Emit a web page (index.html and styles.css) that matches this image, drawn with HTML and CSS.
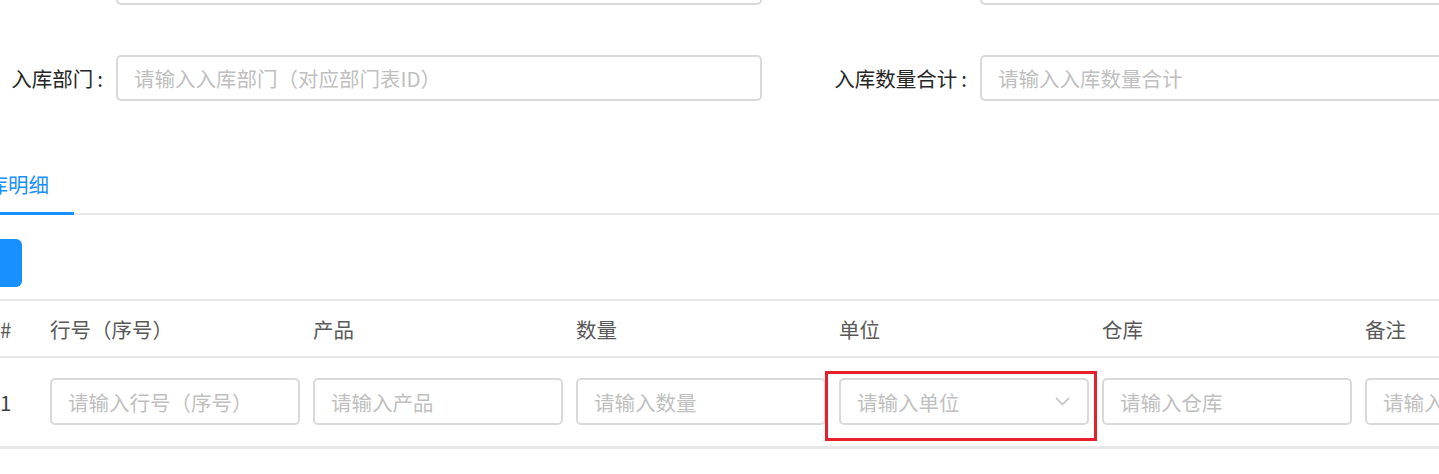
FILE: index.html
```html
<!DOCTYPE HTML>
<html>
  <head>
    <meta charset="UTF-8">
    <title>入库单</title>
    <link rel="stylesheet" href="styles.css">
  </head>

  <body>
    <div class="page">

      <form class="form">
        <div class="form-row">
          <label class="label" for="code">入库单号</label>
          <input type="text" class="input" id="code" placeholder="请输入入库单号">
          <label class="label" for="date">入库日期</label>
          <input type="text" class="input" id="date" placeholder="请输入入库日期">
        </div>
        <div class="form-row">
          <label class="label" for="dept">入库部门</label>
          <input type="text" class="input" id="dept" placeholder="请输入入库部门（对应部门表ID）">
          <label class="label" for="total">入库数量合计</label>
          <input type="text" class="input" id="total" placeholder="请输入入库数量合计">
        </div>
      </form>

      <div class="tabs">
        <div class="tab active">入库明细</div>
      </div>

      <button type="button" class="button">新增</button>

      <div class="table">
        <div class="tr thead">
          <div class="th">#</div>
          <div class="th">行号（序号）</div>
          <div class="th">产品</div>
          <div class="th">数量</div>
          <div class="th">单位</div>
          <div class="th">仓库</div>
          <div class="th">备注</div>
        </div>
        <div class="tr">
          <div class="td num">1</div>
          <div class="td"><input type="text" class="input cell-input" placeholder="请输入行号（序号）"></div>
          <div class="td"><input type="text" class="input cell-input" placeholder="请输入产品"></div>
          <div class="td"><input type="text" class="input cell-input" placeholder="请输入数量"></div>
          <div class="td marked">
            <div class="select">
              <span class="placeholder">请输入单位</span>
              <svg class="arrow" width="15" height="9" viewBox="0 0 15 9"><polyline points="1,1 7.5,7.5 14,1" fill="none" stroke="#bfbfbf" stroke-width="1.5"/></svg>
            </div>
            <div class="mark"></div>
          </div>
          <div class="td"><input type="text" class="input cell-input" placeholder="请输入仓库"></div>
          <div class="td"><input type="text" class="input cell-input" placeholder="请输入备注"></div>
        </div>
      </div>

    </div>
  </body>
</html>
```

FILE: styles.css
```css
body {
  margin: 0;
  background: #ffffff;
  font-family: "Noto Sans CJK SC", "Noto Sans", sans-serif;
  font-size: 20.5px;
  color: #262626;
}

.page {
  width: 1439px;
  height: 474px;
  overflow: hidden;
}

/* form on top, first row is scrolled out of view */
.form {
  margin: -41px 0 0 0;
}

.form-row {
  display: grid;
  grid-template-columns: 116px 646px 218px 646px;
  align-items: center;
  margin-bottom: 50px;
}

.form-row:last-child {
  margin-bottom: 0;
}

.label {
  text-align: right;
  white-space: nowrap;
  color: #262626;
  line-height: 30px;
}

.label::after {
  content: ":";
  margin: 0 13px 0 4px;
}

.input {
  box-sizing: border-box;
  height: 46px;
  padding: 0 16px;
  border: 2px solid #d9d9d9;
  border-radius: 5px;
  font-family: inherit;
  font-size: 20.5px;
  color: #262626;
  background: #ffffff;
  outline: none;
}

.input::placeholder {
  color: #bfbfbf;
}

/* tabs */
.tabs {
  display: flex;
  margin-top: 50px;
  border-bottom: 2px solid #e8e8e8;
}

.tab {
  margin: 0 0 -2px -58px;
  padding: 18px 25px 13px 25px;
  line-height: 30px;
  white-space: nowrap;
  color: #1890ff;
  border-bottom: 3px solid #1890ff;
}

.button {
  display: block;
  margin: 24px 0 0 -62px;
  height: 48px;
  padding: 0 23px 0 21px;
  font-family: inherit;
  font-size: 20px;
  color: #ffffff;
  background-color: #1890ff;
  border: none;
  border-radius: 6px;
}

/* table */
.table {
  margin-top: 12px;
}

.tr {
  display: grid;
  grid-template-columns: 50px repeat(6, 263px);
  border-bottom: 3px solid #e8e8e8;
}

.thead {
  border-top: 2px solid #e8e8e8;
  border-bottom: 2px solid #e8e8e8;
}

.th {
  height: 55px;
  line-height: 55px;
  padding-top: 1px;
  box-sizing: border-box;
  color: #595959;
  white-space: nowrap;
}

.td {
  padding: 20px 0 21px 0;
  display: flex;
  align-items: center;
}

.num {
  color: #404040;
}

.cell-input {
  width: 250px;
  height: 47px;
}

.select {
  box-sizing: border-box;
  width: 250px;
  height: 47px;
  display: flex;
  align-items: center;
  justify-content: space-between;
  padding: 0 17px 0 16px;
  border: 2px solid #d9d9d9;
  border-radius: 5px;
}

.placeholder {
  color: #bfbfbf;
}

.marked {
  position: relative;
}

/* red annotation box round the unit select */
.mark {
  position: absolute;
  left: -14px;
  top: 13px;
  width: 272px;
  height: 70px;
  box-sizing: border-box;
  border: 3px solid #e8202b;
}
```
